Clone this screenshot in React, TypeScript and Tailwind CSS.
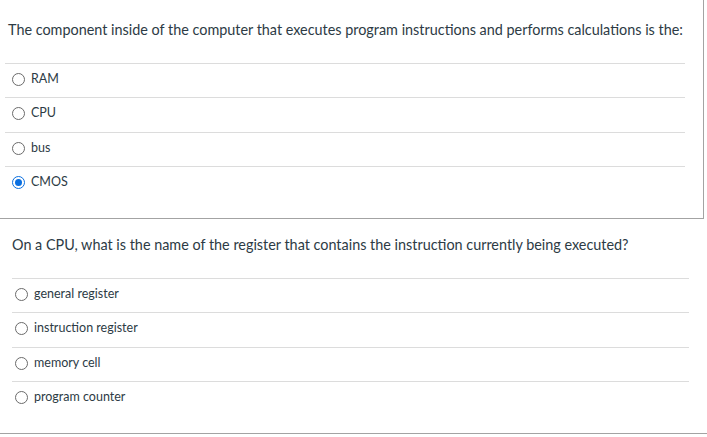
const Radio = ({ checked }: { checked?: boolean }) =>
  checked ? (
    <span className="w-[13px] h-[13px] rounded-full border-[1.5px] border-[#0a6fe0] flex items-center justify-center shrink-0">
      <span className="w-[7px] h-[7px] rounded-full bg-[#0a6fe0]" />
    </span>
  ) : (
    <span className="w-[13px] h-[13px] rounded-full border border-[#6b6b6b] shrink-0" />
  );

interface Opt {
  label: string;
  checked?: boolean;
}

const Option = ({ opt, last, pad }: { opt: Opt; last?: boolean; pad: string }) => (
  <div
    className={`border-t border-[#dcdcdc] flex items-start gap-[6px] ${pad} ${
      last ? "h-[52px]" : "h-[34.33px]"
    }`}
  >
    <div className="h-[31px] flex items-center gap-[6px]">
      <Radio checked={opt.checked} />
      <span className="text-[12.5px] text-[#2d3b45]">{opt.label}</span>
    </div>
  </div>
);

const q1: Opt[] = [{ label: "RAM" }, { label: "CPU" }, { label: "bus" }, { label: "CMOS", checked: true }];
const q2: Opt[] = [
  { label: "general register" },
  { label: "instruction register" },
  { label: "memory cell" },
  { label: "program counter" },
];

export default function App() {
  return (
    <div className="w-[707px] h-[437px] bg-white overflow-hidden" style={{ fontFamily: "Lato, 'Open Sans', sans-serif" }}>
      <div className="w-[704px] border-r border-b border-[#a3a3a3]">
        <div className="pl-[8px] pt-[20px] h-[63px] text-[14.4px] leading-[20px] text-[#2d3b45]">
          The component inside of the computer that executes program instructions and performs calculations is the:
        </div>
        <div className="ml-[5px] w-[680px] flex flex-col">
          {q1.map((o, i) => (
            <Option key={o.label} opt={o} last={i === q1.length - 1} pad="pl-[7px]" />
          ))}
        </div>
      </div>
      <div className="w-[707px] border-b border-[#a3a3a3]">
        <div className="pl-[12px] pt-[16px] h-[59px] text-[14.4px] leading-[20px] text-[#2d3b45]">
          On a CPU, what is the name of the register that contains the instruction currently being executed?
        </div>
        <div className="ml-[12px] w-[677px] flex flex-col">
          {q2.map((o, i) => (
            <Option key={o.label} opt={o} last={i === q2.length - 1} pad="pl-[3px]" />
          ))}
        </div>
      </div>
    </div>
  );
}
